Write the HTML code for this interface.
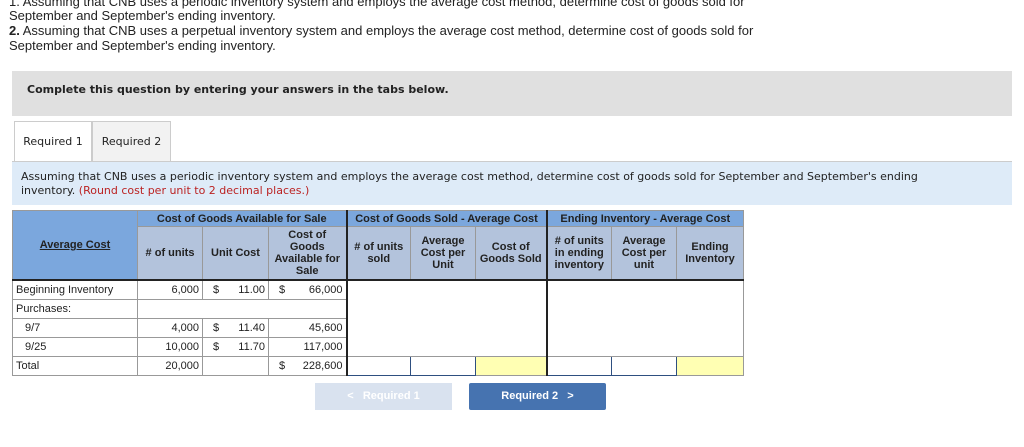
<!DOCTYPE html>
<html><head><style>
body{margin:0;width:1024px;height:447px;overflow:hidden;background:#fff;font-family:"Liberation Sans",Arial,sans-serif;position:relative;color:#222}
.a{position:absolute}
.t{font-size:13px;line-height:15px;left:9px}
table{border-collapse:collapse;position:absolute;left:12px;top:210px;font-size:11px;table-layout:fixed}
td{padding:0 3px;border:1px solid #999;height:18px;white-space:nowrap}
.h1{background:#7ba7dd;font-weight:bold;text-align:center;height:15px}
.h2{background:#b3c3dc;font-weight:bold;text-align:center;line-height:12px;white-space:normal}
.r{text-align:right}
.blue{border:1px solid #2e4f80}
.y{background:#ffffb3}
.d{padding-left:10px}
</style></head><body>
<div class="a t" style="top:-6px">1. Assuming that CNB uses a periodic inventory system and employs the average cost method, determine cost of goods sold for</div>
<div class="a t" style="top:8px">September and September's ending inventory.</div>
<div class="a t" style="top:23px"><b>2.</b> Assuming that CNB uses a perpetual inventory system and employs the average cost method, determine cost of goods sold for</div>
<div class="a t" style="top:38px">September and September's ending inventory.</div>
<div class="a" style="left:12px;top:71px;width:1000px;height:45px;background:#e0e0e0"></div>
<div class="a" style="left:27px;top:83px;font-size:11px;font-weight:bold;font-family:'DejaVu Sans',sans-serif">Complete this question by entering your answers in the tabs below.</div>
<div class="a" style="left:14px;top:121px;width:76px;height:41px;border:1px solid #ccc;border-bottom:none;background:#fff;font-size:11px;text-align:center;line-height:40px;font-family:'DejaVu Sans',sans-serif">Required 1</div>
<div class="a" style="left:92px;top:121px;width:77px;height:39px;border:1px solid #ccc;background:#f2f2f2;font-size:11px;text-align:center;line-height:40px;font-family:'DejaVu Sans',sans-serif">Required 2</div>
<div class="a" style="left:12px;top:161px;width:1000px;height:43px;background:#deebf8;border-top:1px solid #ccc"></div>
<div class="a" style="left:21px;top:170px;font-size:11px;line-height:13.5px;font-family:'DejaVu Sans',sans-serif;width:905px">Assuming that CNB uses a periodic inventory system and employs the average cost method, determine cost of goods sold for September and September's ending inventory. <span style="color:#b22">(Round cost per unit to 2 decimal places.)</span></div>
<table>
<colgroup><col style="width:125px"><col style="width:65px"><col style="width:66px"><col style="width:78px"><col style="width:64px"><col style="width:65px"><col style="width:71px"><col style="width:65px"><col style="width:65px"><col style="width:67px"></colgroup>
<tr><td class="h1" rowspan="2" style="text-decoration:underline;background:#7ba7dd">Average Cost</td><td class="h1" colspan="3">Cost of Goods Available for Sale</td><td class="h1" colspan="3" style="border-left:2px solid #222">Cost of Goods Sold - Average Cost</td><td class="h1" colspan="3" style="border-left:2px solid #222">Ending Inventory - Average Cost</td></tr>
<tr style="height:53px"><td class="h2"># of units</td><td class="h2">Unit Cost</td><td class="h2">Cost of Goods Available for Sale</td><td class="h2" style="border-left:2px solid #222"># of units sold</td><td class="h2">Average Cost per Unit</td><td class="h2">Cost of Goods Sold</td><td class="h2" style="border-left:2px solid #222"># of units in ending inventory</td><td class="h2">Average Cost per unit</td><td class="h2">Ending Inventory</td></tr>
<tr><td style="border-top:2px solid #222">Beginning Inventory</td><td class="r" style="border-top:2px solid #222">6,000</td><td class="d" style="border-top:2px solid #222">$<span style="float:right">11.00</span></td><td class="d" style="border-top:2px solid #222">$<span style="float:right">66,000</span></td><td colspan="3" rowspan="4" style="border-left:2px solid #222;border-top:2px solid #222"></td><td colspan="3" rowspan="4" style="border-left:2px solid #222;border-top:2px solid #222"></td></tr>
<tr><td>Purchases:</td><td colspan="3"></td></tr>
<tr><td style="padding-left:12px">9/7</td><td class="r">4,000</td><td class="d">$<span style="float:right">11.40</span></td><td class="r">45,600</td></tr>
<tr><td style="padding-left:12px">9/25</td><td class="r">10,000</td><td class="d">$<span style="float:right">11.70</span></td><td class="r">117,000</td></tr>
<tr><td>Total</td><td class="r">20,000</td><td></td><td class="d">$<span style="float:right">228,600</span></td><td class="blue" style="border-left:2px solid #222"></td><td class="blue"></td><td class="y"></td><td class="blue" style="border-left:2px solid #222"></td><td class="blue"></td><td class="y"></td></tr>
</table>
<div class="a" style="left:315px;top:383px;width:137px;height:27px;background:#d9e2ef;color:#fff;font-size:11px;font-weight:bold;text-align:center;line-height:27px">&lt;&nbsp;&nbsp; Required 1</div>
<div class="a" style="left:469px;top:383px;width:137px;height:27px;background:#4673b0;color:#fff;font-size:11px;font-weight:bold;text-align:center;line-height:27px;border-radius:2px">Required 2 &nbsp;&nbsp;&gt;</div>
</body></html>
